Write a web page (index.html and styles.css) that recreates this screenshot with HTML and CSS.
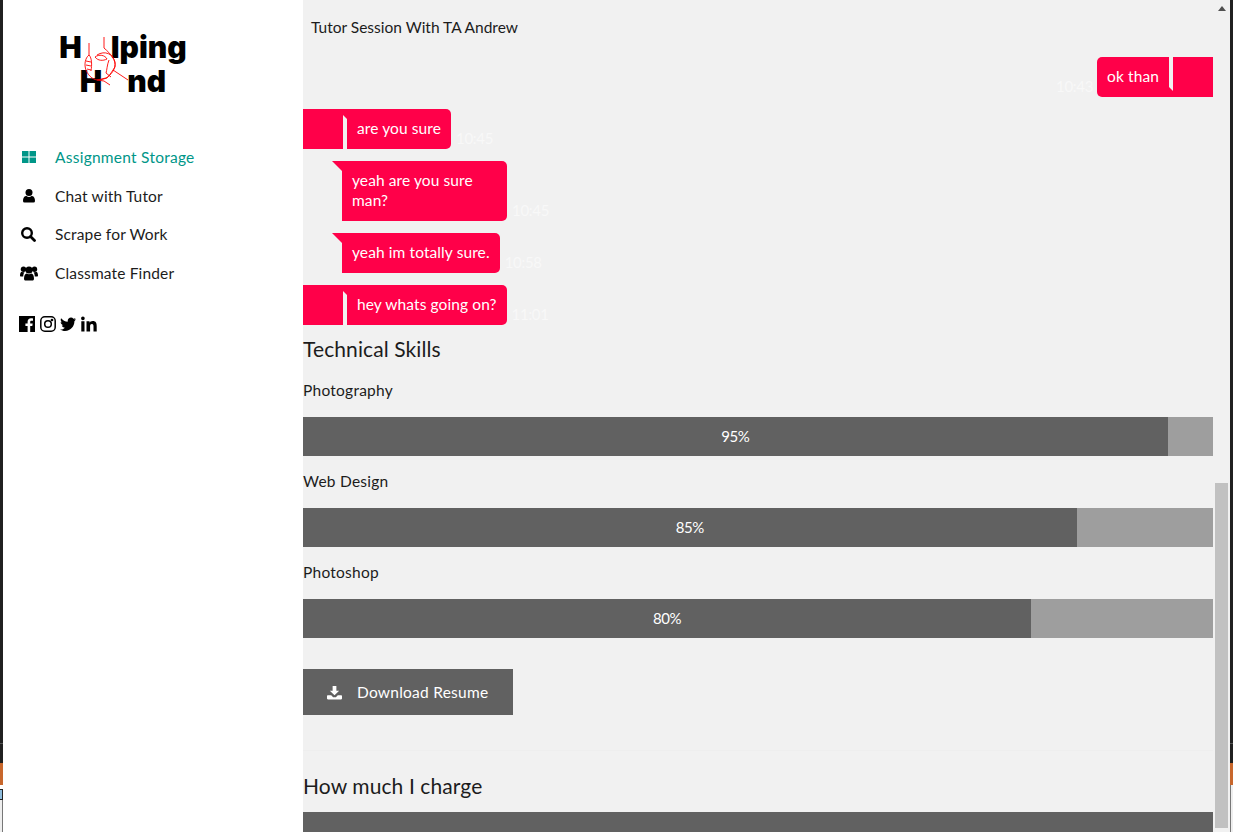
FILE: index.html
```html
<!DOCTYPE html>
<html lang="en">
<head>
    <meta charset="UTF-8">
    <title>Helping Hand</title>
    <link rel="stylesheet" href="styles.css">
</head>
<body>
    <div class="edge edge-left">
        <span class="edge-dark"></span>
        <span class="edge-seam"></span>
        <span class="edge-dark-low"></span>
        <span class="edge-orange"></span>
        <span class="edge-white"></span>
        <span class="edge-box"></span>
        <span class="edge-light"></span>
    </div>

    <!-- Sidebar -->
    <nav class="sidebar">
        <div class="logo">
            <span class="logo-word">H<i class="gap gap-e"></i>lping</span>
            <span class="logo-word">H<i class="gap gap-a"></i>nd</span>
            <svg class="logo-hand" viewBox="0 0 50 52" fill="none" stroke="#f00" stroke-width="0.9">
                <path d="M6 8 L6 20 C2 23 1 30 3 35 C6 42 10 44 14 45 L21 46 L27 50"/>
                <path d="M6 20 C9 23 9 30 8 36 M3 26 L8 27 M3 30 L8 31 M4 34 L8 35"/>
                <path d="M12 22 C16 19 22 20 24 24 C20 26 15 26 12 22 Z"/>
                <path d="M14 20 C22 15 30 19 32 27 C33 34 28 40 23 43 L14 45"/>
                <path d="M21 2 L21 13 C28 19 33 25 32 32 L30 35 L45 45"/>
                <path d="M26 25 C24 30 24 35 23 38 L28 42 M30 35 C28 38 26 41 24 43 L17 45"/>
            </svg>
        </div>
        <ul class="menu">
            <li class="menu-item active">
                <svg class="menu-icon" viewBox="0 0 16 16"><path d="M1 2h6.500v5.500H1zM8.500 2H15v5.500H8.500zM1 8.500h6.500V14H1zM8.500 8.500H15V14H8.500z"/></svg>
                Assignment Storage
            </li>
            <li class="menu-item">
                <svg class="menu-icon" viewBox="0 0 16 16"><circle cx="8" cy="4.500" r="3.500"/><path d="M3.500 14.500A1.500 1.500 0 0 1 2 13c0-3 1-5 3.500-5 1.500 1.200 3.500 1.200 5 0 2.500 0 3.500 2 3.500 5a1.500 1.500 0 0 1-1.500 1.500z"/></svg>
                Chat with Tutor
            </li>
            <li class="menu-item">
                <svg class="menu-icon" viewBox="0 0 16 16"><circle cx="6" cy="7" r="4.800" fill="none" stroke="#000" stroke-width="2.400"/><path d="M9.500 10.500 13.500 14.500" stroke="#000" stroke-width="2.800" stroke-linecap="round"/></svg>
                Scrape for Work
            </li>
            <li class="menu-item">
                <svg class="menu-icon menu-icon-wide" viewBox="0 0 18 16"><circle cx="3.500" cy="4.300" r="2.700"/><circle cx="14.500" cy="4.300" r="2.700"/><circle cx="9" cy="5" r="3.600"/><path d="M0 10.500c0-2.500.8-3.800 2-3.800.8.500 1.500.7 2.500.5C3.700 8.200 3.300 9.700 3.200 11.500H1c-.6 0-1-.4-1-1zM18 10.500c0-2.500-.8-3.800-2-3.800-.8.500-1.500.7-2.500.5.800 1 1.200 2.500 1.300 4.300H17c.6 0 1-.4 1-1zM5.500 15.500c-.8 0-1.500-.6-1.500-1.500 0-3.200 1-5.500 2.700-5.500 1.400 1.100 3.200 1.100 4.600 0C13 8.500 14 10.800 14 14c0 .9-.7 1.500-1.500 1.500z"/></svg>
                Classmate Finder
            </li>
        </ul>
        <div class="social">
            <svg viewBox="0 0 16 16"><path d="M0 0h16v16h-4.800v-6h2.100l.4-2.500h-2.500V6c0-.8.300-1.300 1.400-1.300H14V2.500c-.4 0-1.200-.2-2-.2-2 0-3.400 1.200-3.400 3.400v1.800H6.400V10h2.200v6H0z"/></svg>
            <svg viewBox="0 0 16 16" fill="none" stroke="#000" stroke-width="1.500"><rect x=".8" y=".8" width="14.400" height="14.400" rx="4"/><circle cx="8" cy="8" r="3.300"/><circle cx="12" cy="4" r=".6" fill="#000"/></svg>
            <svg viewBox="0 0 16 16"><path d="M16 3.200c-.6.300-1.200.4-1.900.5.700-.4 1.200-1 1.400-1.800-.6.400-1.300.6-2.100.8C12.800 2 12 1.600 11 1.600c-1.800 0-3.300 1.500-3.300 3.300 0 .3 0 .5.100.8C5.100 5.500 2.600 4.200 1.100 2.200.8 2.700.7 3.200.7 3.800c0 1.100.6 2.100 1.500 2.700-.5 0-1-.2-1.500-.4 0 1.600 1.100 2.900 2.600 3.200-.5.100-1 .2-1.500.1.400 1.300 1.600 2.200 3.100 2.300C3.500 13.200 1.700 13.700 0 13.500c1.500.9 3.200 1.500 5 1.500 6 0 9.400-5 9.400-9.400v-.4c.6-.5 1.200-1.200 1.600-2z"/></svg>
            <svg viewBox="0 0 16 16"><path d="M.3 5.300h3.200V15.500H.3zM1.900.5a1.800 1.800 0 1 1 0 3.700 1.800 1.800 0 0 1 0-3.700zM5.500 5.300h3v1.400c.5-.9 1.600-1.700 3.200-1.700 3.400 0 4 2.200 4 5.100v5.400h-3.200v-4.800c0-1.100 0-2.600-1.600-2.600s-1.800 1.200-1.800 2.500v4.900H5.500z"/></svg>
        </div>
    </nav>

    <!-- Conteudo -->
    <main class="content">
        <h4 class="session-title">Tutor Session With TA Andrew</h4>

        <div class="chat">
            <div class="msg msg-right">
                <span class="time">10:43</span>
                <div class="bubble bubble-flat-right">ok than<i class="avatar avatar-right"></i></div>
            </div>
            <div class="msg">
                <div class="bubble bubble-flat-left"><i class="avatar"></i>are you sure</div>
                <span class="time">10:45</span>
            </div>
            <div class="msg msg-indent">
                <div class="bubble bubble-tail bubble-wrap">yeah are you sure man?</div>
                <span class="time">10:45</span>
            </div>
            <div class="msg msg-indent">
                <div class="bubble bubble-tail">yeah im totally sure.</div>
                <span class="time">10:58</span>
            </div>
            <div class="msg">
                <div class="bubble bubble-flat-left"><i class="avatar"></i>hey whats going on?</div>
                <span class="time">11:01</span>
            </div>
        </div>

        <h3 class="section-title">Technical Skills</h3>

        <p class="skill-name">Photography</p>
        <div class="skill-bar"><div class="skill-fill" style="width: 95%">95%</div></div>
        <p class="skill-name">Web Design</p>
        <div class="skill-bar"><div class="skill-fill" style="width: 85%">85%</div></div>
        <p class="skill-name">Photoshop</p>
        <div class="skill-bar"><div class="skill-fill" style="width: 80%">80%</div></div>

        <button class="btn-download">
            <svg viewBox="0 0 16 16"><path d="M6 1h4v5h3l-5 5-5-5h3zM1 11h3.500l2 2h3l2-2H15c.5 0 1 .4 1 1v2.500c0 .5-.5 1-1 1H1c-.5 0-1-.5-1-1V12c0-.6.500-1 1-1z"/></svg>
            Download Resume
        </button>

        <hr class="divider">

        <h3 class="section-title">How much I charge</h3>
        <div class="price-head"></div>
    </main>

    <div class="scrollbar">
        <span class="scroll-arrow"></span>
        <span class="scroll-thumb"></span>
    </div>

    <div class="edge edge-right">
        <span class="edge-dark"></span>
        <span class="edge-seam"></span>
        <span class="edge-dark-low"></span>
        <span class="edge-orange"></span>
        <span class="edge-light"></span>
    </div>
</body>
</html>
```

FILE: styles.css
```css
html, body {
  height: 100%;
}

body {
  margin: 0;
  display: flex;
  height: 100vh;
  overflow: hidden;
  background-color: #f1f1f1;
  color: #1c1c1c;
  font-family: Lato, "Open Sans", sans-serif;
  font-size: 15.5px;
  letter-spacing: 0.25px;
}

/* Pedaco da janela de tras */
.edge {
  width: 3px;
  flex: none;
  display: flex;
  flex-direction: column;
}

.edge-dark {
  height: 743px;
  background-color: #202020;
}

.edge-seam {
  height: 1px;
  background-color: #555;
}

.edge-dark-low {
  height: 19px;
  background-color: #202020;
}

.edge-orange {
  height: 22px;
  background-color: #c8672c;
}

.edge-white {
  height: 4px;
  background-color: #fff;
}

.edge-box {
  height: 11px;
  box-sizing: border-box;
  background-color: #8fbcdc;
  border: 1px solid #222;
  border-left: none;
}

.edge-light {
  flex: 1;
  background-color: #eee;
}

.edge-left .edge-light {
  border-right: 1px solid #777;
}

.edge-right .edge-light {
  border-left: 1px solid #777;
}

/* Sidebar */
.sidebar {
  width: 300px;
  flex: none;
  background-color: #fff;
}

.logo {
  position: relative;
  width: 130px;
  height: 68px;
  margin: 30px 0 0 55px;
  display: flex;
  flex-direction: column;
  align-items: center;
  color: #000;
  font-family: Inter, Roboto, sans-serif;
  font-size: 30px;
  font-weight: 900;
  line-height: 34px;
  letter-spacing: 0;
}

.logo-word {
  white-space: nowrap;
}

.gap {
  display: inline-block;
}

.gap-e {
  width: 29px;
}

.gap-a {
  width: 25px;
}

.logo-hand {
  position: absolute;
  left: 25px;
  top: 5px;
  width: 50px;
  height: 52px;
}

.menu {
  list-style: none;
  margin: 40px 0 0;
  padding: 0;
}

.menu-item {
  display: flex;
  align-items: center;
  height: 38.6px;
  padding-left: 18px;
  letter-spacing: 0.15px;
}

.menu-item.active {
  color: #009688;
  letter-spacing: 0.25px;
}

.menu-icon {
  width: 16px;
  height: 16px;
  margin-right: 18px;
  flex: none;
}

.menu-icon-wide {
  width: 18px;
  margin-left: -1px;
  margin-right: 17px;
}

.active .menu-icon {
  fill: #009688;
}

.social {
  display: flex;
  gap: 4.5px;
  margin: 24px 0 0 16px;
}

.social svg {
  width: 16px;
  height: 16px;
}

/* Conteudo */
.content {
  flex: 1;
  min-width: 0;
}

.session-title {
  margin: 17px 0 0 8px;
  font-size: 15.5px;
  font-weight: 400;
  line-height: 20px;
  letter-spacing: 0;
}

.chat {
  margin-top: 20px;
  display: flex;
  flex-direction: column;
  gap: 12px;
}

.msg {
  display: flex;
  align-items: flex-end;
}

.msg-right {
  justify-content: flex-end;
}

.msg-indent {
  padding-left: 39px;
}

.bubble {
  position: relative;
  display: flex;
  align-items: center;
  min-height: 40px;
  box-sizing: border-box;
  padding: 9px 10px 11px;
  background-color: #ff0049;
  border-radius: 5px;
  color: #fff;
  line-height: 20px;
  letter-spacing: 0.1px;
}

.bubble-flat-left {
  border-radius: 0 5px 5px 0;
}

.bubble-flat-right {
  border-radius: 5px 0 0 5px;
}

.bubble-tail {
  border-radius: 0 5px 5px 0;
}

/* Biquinho da mensagem */
.bubble-tail::before {
  content: "";
  position: absolute;
  top: 0;
  left: -10px;
  border-top: 10px solid #ff0049;
  border-left: 10px solid transparent;
}

.bubble-wrap {
  width: 165px;
}

.avatar {
  position: relative;
  width: 44px;
  height: 40px;
  margin: -9px 10px -11px -10px;
  flex: none;
}

.avatar-right {
  margin: -9px -10px -11px 10px;
}

/* Corte entre o avatar e o texto */
.avatar::after {
  content: "";
  position: absolute;
  top: 6px;
  right: 0;
  width: 4px;
  height: 34px;
  background-color: #f1f1f1;
  clip-path: polygon(0 0, 100% 4px, 100% 100%, 0 100%);
}

.avatar-right::after {
  top: 0;
  left: 0;
  right: auto;
  clip-path: polygon(0 0, 100% 0, 100% 100%, 0 30px);
}

.time {
  margin: 0 4px 1px 5px;
  font-size: 15px;
  line-height: 20px;
  letter-spacing: -0.3px;
  color: #f8f8f8;
}

.section-title {
  margin: 12px 0 0;
  font-size: 21px;
  font-weight: 400;
  line-height: 24px;
  letter-spacing: 0.1px;
}

.skill-name {
  margin: 20px 0 0;
  line-height: 18px;
}

.skill-name + .skill-bar {
  margin-top: 18px;
}

.skill-bar + .skill-name {
  margin-top: 16px;
}

.skill-bar {
  background-color: #9e9e9e;
  height: 39px;
}

.skill-fill {
  height: 100%;
  box-sizing: border-box;
  padding-bottom: 2px;
  display: flex;
  align-items: center;
  justify-content: center;
  background-color: #616161;
  color: #fff;
  font-size: 15px;
  letter-spacing: -0.4px;
}

.btn-download {
  display: flex;
  align-items: center;
  width: 210px;
  height: 46px;
  margin-top: 31px;
  padding: 0 0 0 24px;
  border: none;
  background-color: #616161;
  color: #fff;
  font-family: inherit;
  font-size: 15.5px;
  letter-spacing: 0.25px;
}

.btn-download svg {
  width: 15px;
  height: 15px;
  margin-right: 15px;
  fill: #fff;
}

.divider {
  margin: 35px 0 0;
  border: none;
  border-top: 1px solid #eee;
}

.section-title + .price-head {
  margin-top: 14px;
}

.divider + .section-title {
  margin-top: 23px;
}

.price-head {
  height: 60px;
  background-color: #616161;
}

/* Barra de rolagem */
.scrollbar {
  width: 17px;
  flex: none;
  display: flex;
  flex-direction: column;
  align-items: center;
}

.scroll-arrow {
  margin-top: 6px;
  border-left: 4px solid transparent;
  border-right: 4px solid transparent;
  border-bottom: 5px solid #505050;
}

.scroll-thumb {
  width: 13px;
  height: 345px;
  margin-top: 472px;
  background-color: #c1c1c1;
}
```
